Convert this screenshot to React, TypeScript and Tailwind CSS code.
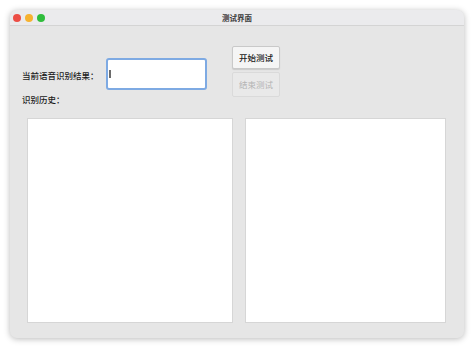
export default function App() {
  return (
    <div
      className="w-[474px] h-[348px] bg-white p-[10px]"
      style={{ fontFamily: '"Noto Sans CJK SC", "Noto Sans", sans-serif' }}
    >
      <div className="w-[454px] h-[328px] rounded-[7px] bg-[#e6e6e6] shadow-[0_1px_6px_rgba(0,0,0,0.28)] overflow-hidden flex flex-col">
        {/* Title bar */}
        <div className="relative h-[16px] shrink-0 bg-[#ebebed] border-b border-[#d4d4d4] flex items-center">
          <div className="flex items-center gap-[4px] pl-[3px]">
            <span className="w-[8px] h-[8px] rounded-full bg-[#ec4e46]" />
            <span className="w-[8px] h-[8px] rounded-full bg-[#f6b230]" />
            <span className="w-[8px] h-[8px] rounded-full bg-[#2fbd3c]" />
          </div>
          <div className="absolute inset-0 flex items-center justify-center text-[7.5px] font-bold text-[#3a3a3a] leading-none">
            测试界面
          </div>
        </div>

        {/* Content */}
        <div className="flex-1 flex flex-col pt-[20px]">
          <div className="flex items-start">
            <div className="flex flex-col pl-[12px] mt-[12px]">
              <div className="flex items-center">
                <div className="w-[84px] pt-[2px] text-[8.5px] font-medium text-[#1a1a1a] leading-none">当前语音识别结果：</div>
                <div className="w-[101px] h-[32px] rounded-[3px] border-2 border-[#7eaae3] bg-white flex items-center pl-[1px]">
                  <span className="w-[1.5px] h-[8px] bg-[#6b6b6b]" />
                </div>
              </div>
              <div className="mt-[4px] h-[10px] text-[8.5px] font-medium text-[#1a1a1a] leading-[10px]">识别历史：</div>
            </div>
            <div className="flex flex-col gap-[3px] ml-[25px]">
              <div className="w-[48px] h-[23px] rounded-[2px] border border-[#c9c9c9] bg-[#f5f5f5] shadow-[0_1px_1px_rgba(0,0,0,0.12)] flex items-center justify-center text-[8.5px] font-medium text-[#1a1a1a]">
                开始测试
              </div>
              <div className="w-[48px] h-[25px] rounded-[2px] border border-[#dadada] bg-[#e9e9e9] flex items-center justify-center text-[8.5px] text-[#b4b4b4]">
                结束测试
              </div>
            </div>
          </div>

          <div className="flex gap-[12px] pl-[17px] mt-[14px]">
            <div className="w-[206px] h-[205px] bg-white border border-[#d6d6d6]" />
            <div className="w-[201px] h-[205px] bg-white border border-[#d6d6d6]" />
          </div>
        </div>
      </div>
    </div>
  );
}
